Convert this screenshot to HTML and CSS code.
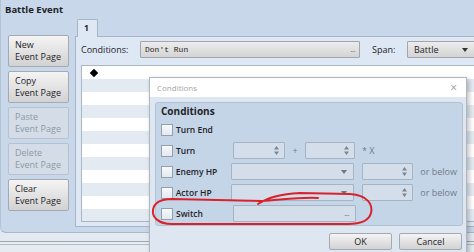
FILE: index.html
```html
<!DOCTYPE html>
<html lang="en">
<head>
    <meta charset="UTF-8">
    <title>Battle Event</title>
    <link rel="stylesheet" href="styles.css">
</head>
<body>
    <div class="window">
        <div class="window-title">Battle Event</div>
        <div class="main">
            <div class="pages">
                <button class="page-btn">New<br>Event Page</button>
                <button class="page-btn">Copy<br>Event Page</button>
                <button class="page-btn disabled">Paste<br>Event Page</button>
                <button class="page-btn disabled">Delete<br>Event Page</button>
                <button class="page-btn">Clear<br>Event Page</button>
            </div>
            <div class="tabs">
                <div class="tab-strip"><div class="tab">1</div></div>
                <div class="pane">
                    <div class="cond-row">
                        <span class="cond-label">Conditions:</span>
                        <div class="field mono">Don't Run<span class="dots">...</span></div>
                        <span class="span-label">Span:</span>
                        <div class="field select">Battle<svg class="caret" width="6" height="4" viewBox="0 0 6 4"><path d="M0 0h6L3 4z" fill="#333"/></svg></div>
                    </div>
                    <div class="list">
                        <div class="list-row"><span class="diamond"></span></div>
                    </div>
                </div>
            </div>
        </div>
    </div>
    <div class="footer"></div>

    <div class="dialog">
        <div class="dialog-title">
            <span>Conditions</span>
            <span class="close">&times;</span>
        </div>
        <div class="dialog-body">
            <div class="group">
                <div class="group-title">Conditions</div>
                <div class="opt">
                    <span class="check"></span><span class="opt-label">Turn End</span>
                </div>
                <div class="opt">
                    <span class="check"></span><span class="opt-label">Turn</span>
                    <div class="ctl spin w52"><svg class="spin-arrows" width="5" height="9" viewBox="0 0 5 9"><path d="M0 3.5L2.5 0L5 3.5zM0 5.5h5L2.5 9z" fill="#7b8590"/></svg></div>
                    <span class="plus">+</span>
                    <div class="ctl spin w50"><svg class="spin-arrows" width="5" height="9" viewBox="0 0 5 9"><path d="M0 3.5L2.5 0L5 3.5zM0 5.5h5L2.5 9z" fill="#7b8590"/></svg></div>
                    <span class="note">* X</span>
                </div>
                <div class="opt">
                    <span class="check"></span><span class="opt-label">Enemy HP</span>
                    <div class="ctl combo"><svg width="6" height="4" viewBox="0 0 6 4"><path d="M0 0h6L3 4z" fill="#6d7781"/></svg></div>
                    <div class="ctl spin w51"><svg class="spin-arrows" width="5" height="9" viewBox="0 0 5 9"><path d="M0 3.5L2.5 0L5 3.5zM0 5.5h5L2.5 9z" fill="#7b8590"/></svg></div>
                    <span class="note">or below</span>
                </div>
                <div class="opt">
                    <span class="check"></span><span class="opt-label">Actor HP</span>
                    <div class="ctl combo"><svg width="6" height="4" viewBox="0 0 6 4"><path d="M0 0h6L3 4z" fill="#6d7781"/></svg></div>
                    <div class="ctl spin w51"><svg class="spin-arrows" width="5" height="9" viewBox="0 0 5 9"><path d="M0 3.5L2.5 0L5 3.5zM0 5.5h5L2.5 9z" fill="#7b8590"/></svg></div>
                    <span class="note">or below</span>
                </div>
                <div class="opt">
                    <span class="check"></span><span class="opt-label">Switch</span>
                    <div class="ctl combo"><span class="dots">...</span></div>
                </div>
            </div>
            <div class="dialog-actions">
                <button class="action-btn">OK</button>
                <button class="action-btn">Cancel</button>
            </div>
        </div>
    </div>

    <!-- hand-drawn highlight around the Switch row -->
    <svg class="markup" width="474" height="252" viewBox="0 0 474 252">
        <path d="M258 204 C268 197 282 194 300 193 L350 194 C368 195 373 205 371 213 C369 221 360 224 348 224 L172 224 C158 224 152 217 153 210 C154 203 160 199 172 199 L262 201 C280 200 300 197 318 198"
              fill="none" stroke="#d8232c" stroke-width="2" stroke-linecap="round"/>
    </svg>
</body>
</html>
```

FILE: styles.css
```css
:root {
    --bg: #c8d7e9;
    --pane: #dde8f4;
    --border: #a7b5c5;
    --text: #1f2326;
    --muted: #8f99a4;
    --ctl: #d3deea;
    --ctl-border: #a6b3c2;
}

* {
    box-sizing: border-box;
    margin: 0;
    padding: 0;
}

body {
    width: 474px;
    height: 252px;
    overflow: hidden;
    position: relative;
    font-family: 'Open Sans', 'Noto Sans', sans-serif;
    font-size: 9px;
    color: var(--text);
    background-color: #dfe6ee;
}

.window {
    height: 233px;
    background-color: var(--bg);
    border-bottom: 1px solid #a9b8c8;
    border-left: 1px solid #b5c3d2;
    border-bottom-left-radius: 6px;
    overflow: hidden;
}

.window-title {
    height: 19px;
    line-height: 20px;
    padding-left: 4px;
    font-size: 9.5px;
    font-weight: 700;
}

.main {
    display: flex;
}

.pages {
    display: flex;
    flex-direction: column;
    gap: 4px;
    width: 64px;
    margin: 16px 0 0 7px;
}

.page-btn {
    height: 32px;
    padding-left: 6px;
    text-align: left;
    font-family: inherit;
    font-size: 9px;
    line-height: 12.5px;
    color: var(--text);
    background: linear-gradient(#f4f4f4, #d2d2d2);
    border: 1px solid #a3aab2;
    border-radius: 2px;
}

.page-btn.disabled {
    background: #d4dde7;
    border-color: #b7c2ce;
    color: var(--muted);
}

.tabs {
    flex: 1;
    margin-left: 6px;
    margin-right: -4px;
}

.tab-strip {
    display: flex;
    padding-left: 2px;
    height: 17px;
}

.tab {
    width: 21px;
    height: 18px;
    padding-left: 6px;
    line-height: 15px;
    font-weight: 700;
    font-size: 8.5px;
    background-color: var(--pane);
    border: 1px solid var(--border);
    border-bottom: none;
    border-radius: 2px 2px 0 0;
    position: relative;
    z-index: 1;
}

.pane {
    height: 191px;
    background-color: var(--pane);
    border: 1px solid var(--border);
}

.cond-row {
    display: flex;
    align-items: center;
    padding: 4px 0 0 5px;
    height: 21px;
}

.cond-label {
    width: 59px;
}

.field {
    height: 17px;
    display: flex;
    align-items: center;
    padding: 0 4px;
    background: linear-gradient(#ececec, #d4d4d4);
    border: 1px solid #9ea6ae;
    border-radius: 1px;
}

.mono {
    width: 220px;
    font-family: 'Liberation Mono', 'DejaVu Sans Mono', monospace;
    font-size: 8px;
    justify-content: space-between;
}

.dots {
    color: #666;
    font-family: 'Open Sans', sans-serif;
    font-size: 8px;
    letter-spacing: -0.5px;
    padding-bottom: 3px;
}

.span-label {
    width: 35px;
    margin-left: 12px;
}

.select {
    width: 70px;
    padding: 0 8px 0 6px;
    justify-content: space-between;
    font-size: 9px;
}

.list {
    height: 157px;
    margin: 7px 0 0 5px;
    border: 1px solid #aab6c2;
    background: repeating-linear-gradient(#fff 0 13px, #e3eaf2 13px 26px);
}

.list-row {
    height: 13px;
    padding: 4px 0 0 9px;
}

.diamond {
    display: block;
    width: 6px;
    height: 6px;
    background: #000;
    transform: rotate(45deg);
}

.footer {
    height: 19px;
    background: linear-gradient(#e4eaf1 0 8px, #9ea8b3 8px 9px, #e8edf2 9px 11px, #b3bcc6 11px 12px, #e6ebf1 12px);
}

/* Conditions dialog */
.dialog {
    position: absolute;
    left: 149px;
    top: 77px;
    width: 318px;
    height: 180px;
    border: 1px solid #aeb6bf;
    background-color: #dee7f1;
    box-shadow: 2px 2px 5px rgba(0, 0, 0, 0.25);
}

.dialog-title {
    height: 19px;
    display: flex;
    align-items: center;
    justify-content: space-between;
    padding: 0 9px 0 7px;
    background: #fff;
    color: #a3a3a3;
    font-size: 8px;
}

.close {
    font-size: 12px;
    color: #9a9a9a;
}

.dialog-body {
    padding: 5px 3px 0 5px;
}

.group {
    height: 124px;
    padding: 2px 5px 0;
    background-color: #c5d5e8;
    border: 1px solid #b3c2d3;
    border-radius: 3px;
}

.group-title {
    height: 14px;
    line-height: 13px;
    font-size: 10px;
    font-weight: 700;
}

.opt {
    display: flex;
    align-items: center;
    height: 21px;
    white-space: nowrap;
}

.check {
    width: 12px;
    height: 12px;
    margin-right: 3px;
    background: linear-gradient(#f7f9fb, #e3e9ef);
    border: 1px solid #939fab;
}

.opt-label {
    width: 57px;
    font-size: 8.5px;
    font-weight: 600;
}

.ctl {
    flex: none;
    height: 17px;
    display: flex;
    align-items: center;
    justify-content: flex-end;
    padding-right: 6px;
    background-color: var(--ctl);
    border: 1px solid var(--ctl-border);
    border-radius: 1px;
}

.w52 { width: 52px; }
.w50 { width: 50px; }
.w51 { width: 51px; margin-left: 8px; }

.combo {
    width: 123px;
}

.plus {
    width: 20px;
    text-align: center;
    color: #707a84;
}

.note {
    margin-left: 7px;
    color: #6f7b88;
    font-size: 9px;
}

.spin .spin-arrows {
    margin-right: -1px;
}

.dialog-actions {
    display: flex;
    justify-content: flex-end;
    gap: 7px;
    padding: 7px 1px 0 0;
}

.action-btn {
    width: 63px;
    height: 17px;
    font-family: inherit;
    font-size: 9px;
    color: var(--text);
    background: linear-gradient(#f4f4f4, #d2d2d2);
    border: 1px solid #a3aab2;
    border-radius: 2px;
}

.markup {
    position: absolute;
    left: 0;
    top: 0;
    pointer-events: none;
}
```
